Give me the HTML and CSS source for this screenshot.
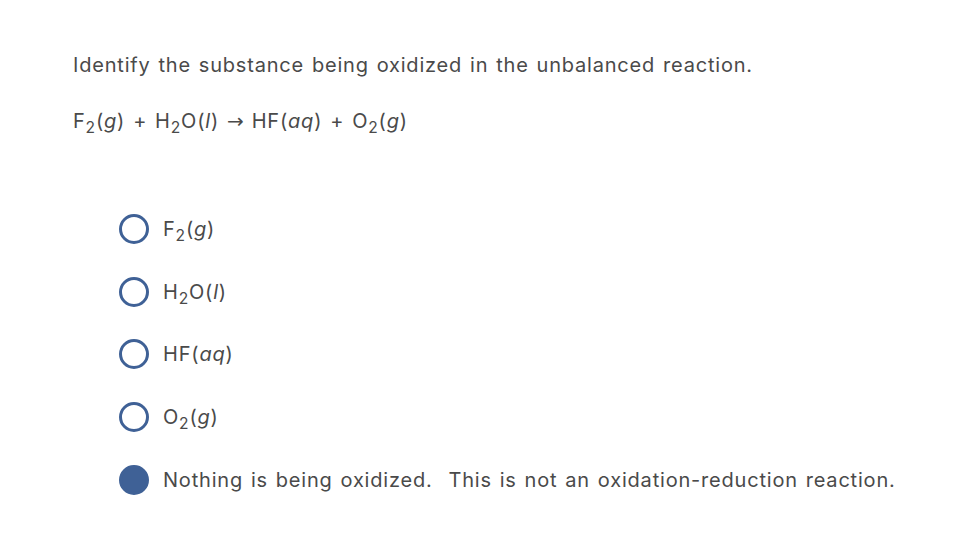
FILE: index.html
```html
<!DOCTYPE html>
<html lang="en">
<head>
<meta charset="utf-8">
<title>Question</title>
<link rel="stylesheet" href="styles.css">
</head>
<body>
<main class="question">
  <p class="prompt">Identify the substance being oxidized in the unbalanced reaction.</p>
  <p class="equation">F<span class="sub">2</span>(<i>g</i>) + H<span class="sub">2</span>O(<i>l</i>) <span class="arrow">&#8594;</span> HF(<i>aq</i>) + O<span class="sub">2</span>(<i>g</i>)</p>
  <ul class="options">
    <li class="option"><span class="radio"></span><span class="label">F<span class="sub">2</span>(<i>g</i>)</span></li>
    <li class="option"><span class="radio"></span><span class="label">H<span class="sub">2</span>O(<i>l</i>)</span></li>
    <li class="option"><span class="radio"></span><span class="label">HF(<i>aq</i>)</span></li>
    <li class="option"><span class="radio"></span><span class="label">O<span class="sub">2</span>(<i>g</i>)</span></li>
    <li class="option"><span class="radio checked"></span><span class="label">Nothing is being oxidized.&nbsp; This is not an oxidation-reduction reaction.</span></li>
  </ul>
</main>
</body>
</html>
```
FILE: styles.css
```css
html, body {
  margin: 0;
  padding: 0;
  background: #ffffff;
}
body {
  font-family: "Inter", "Liberation Sans", sans-serif;
  color: #4a4a4a;
  font-size: 20px;
  letter-spacing: 0.8px;
  word-spacing: 1.5px;
}
.question {
  padding: 52px 0 0 73px;
}
.prompt {
  margin: 0;
  line-height: 26px;
}
.equation {
  margin: 30px 0 0 0;
  line-height: 26px;
}
.equation i, .label i {
  font-style: italic;
}
.sub {
  font-size: 0.78em;
  vertical-align: -0.3em;
  line-height: 0;
}
.arrow {
  font-family: "DejaVu Sans", sans-serif;
  letter-spacing: 0;
}
.options {
  list-style: none;
  margin: 80px 0 0 46px;
  padding: 0;
  display: flex;
  flex-direction: column;
  gap: 32.7px;
}
.option {
  display: flex;
  align-items: center;
  gap: 14px;
  height: 30px;
}
.radio {
  box-sizing: border-box;
  width: 30px;
  height: 30px;
  border-radius: 50%;
  border: 3.5px solid #3f6196;
  flex: none;
}
.radio.checked {
  background: #3f6196;
}
.label {
  line-height: 26px;
}
```
